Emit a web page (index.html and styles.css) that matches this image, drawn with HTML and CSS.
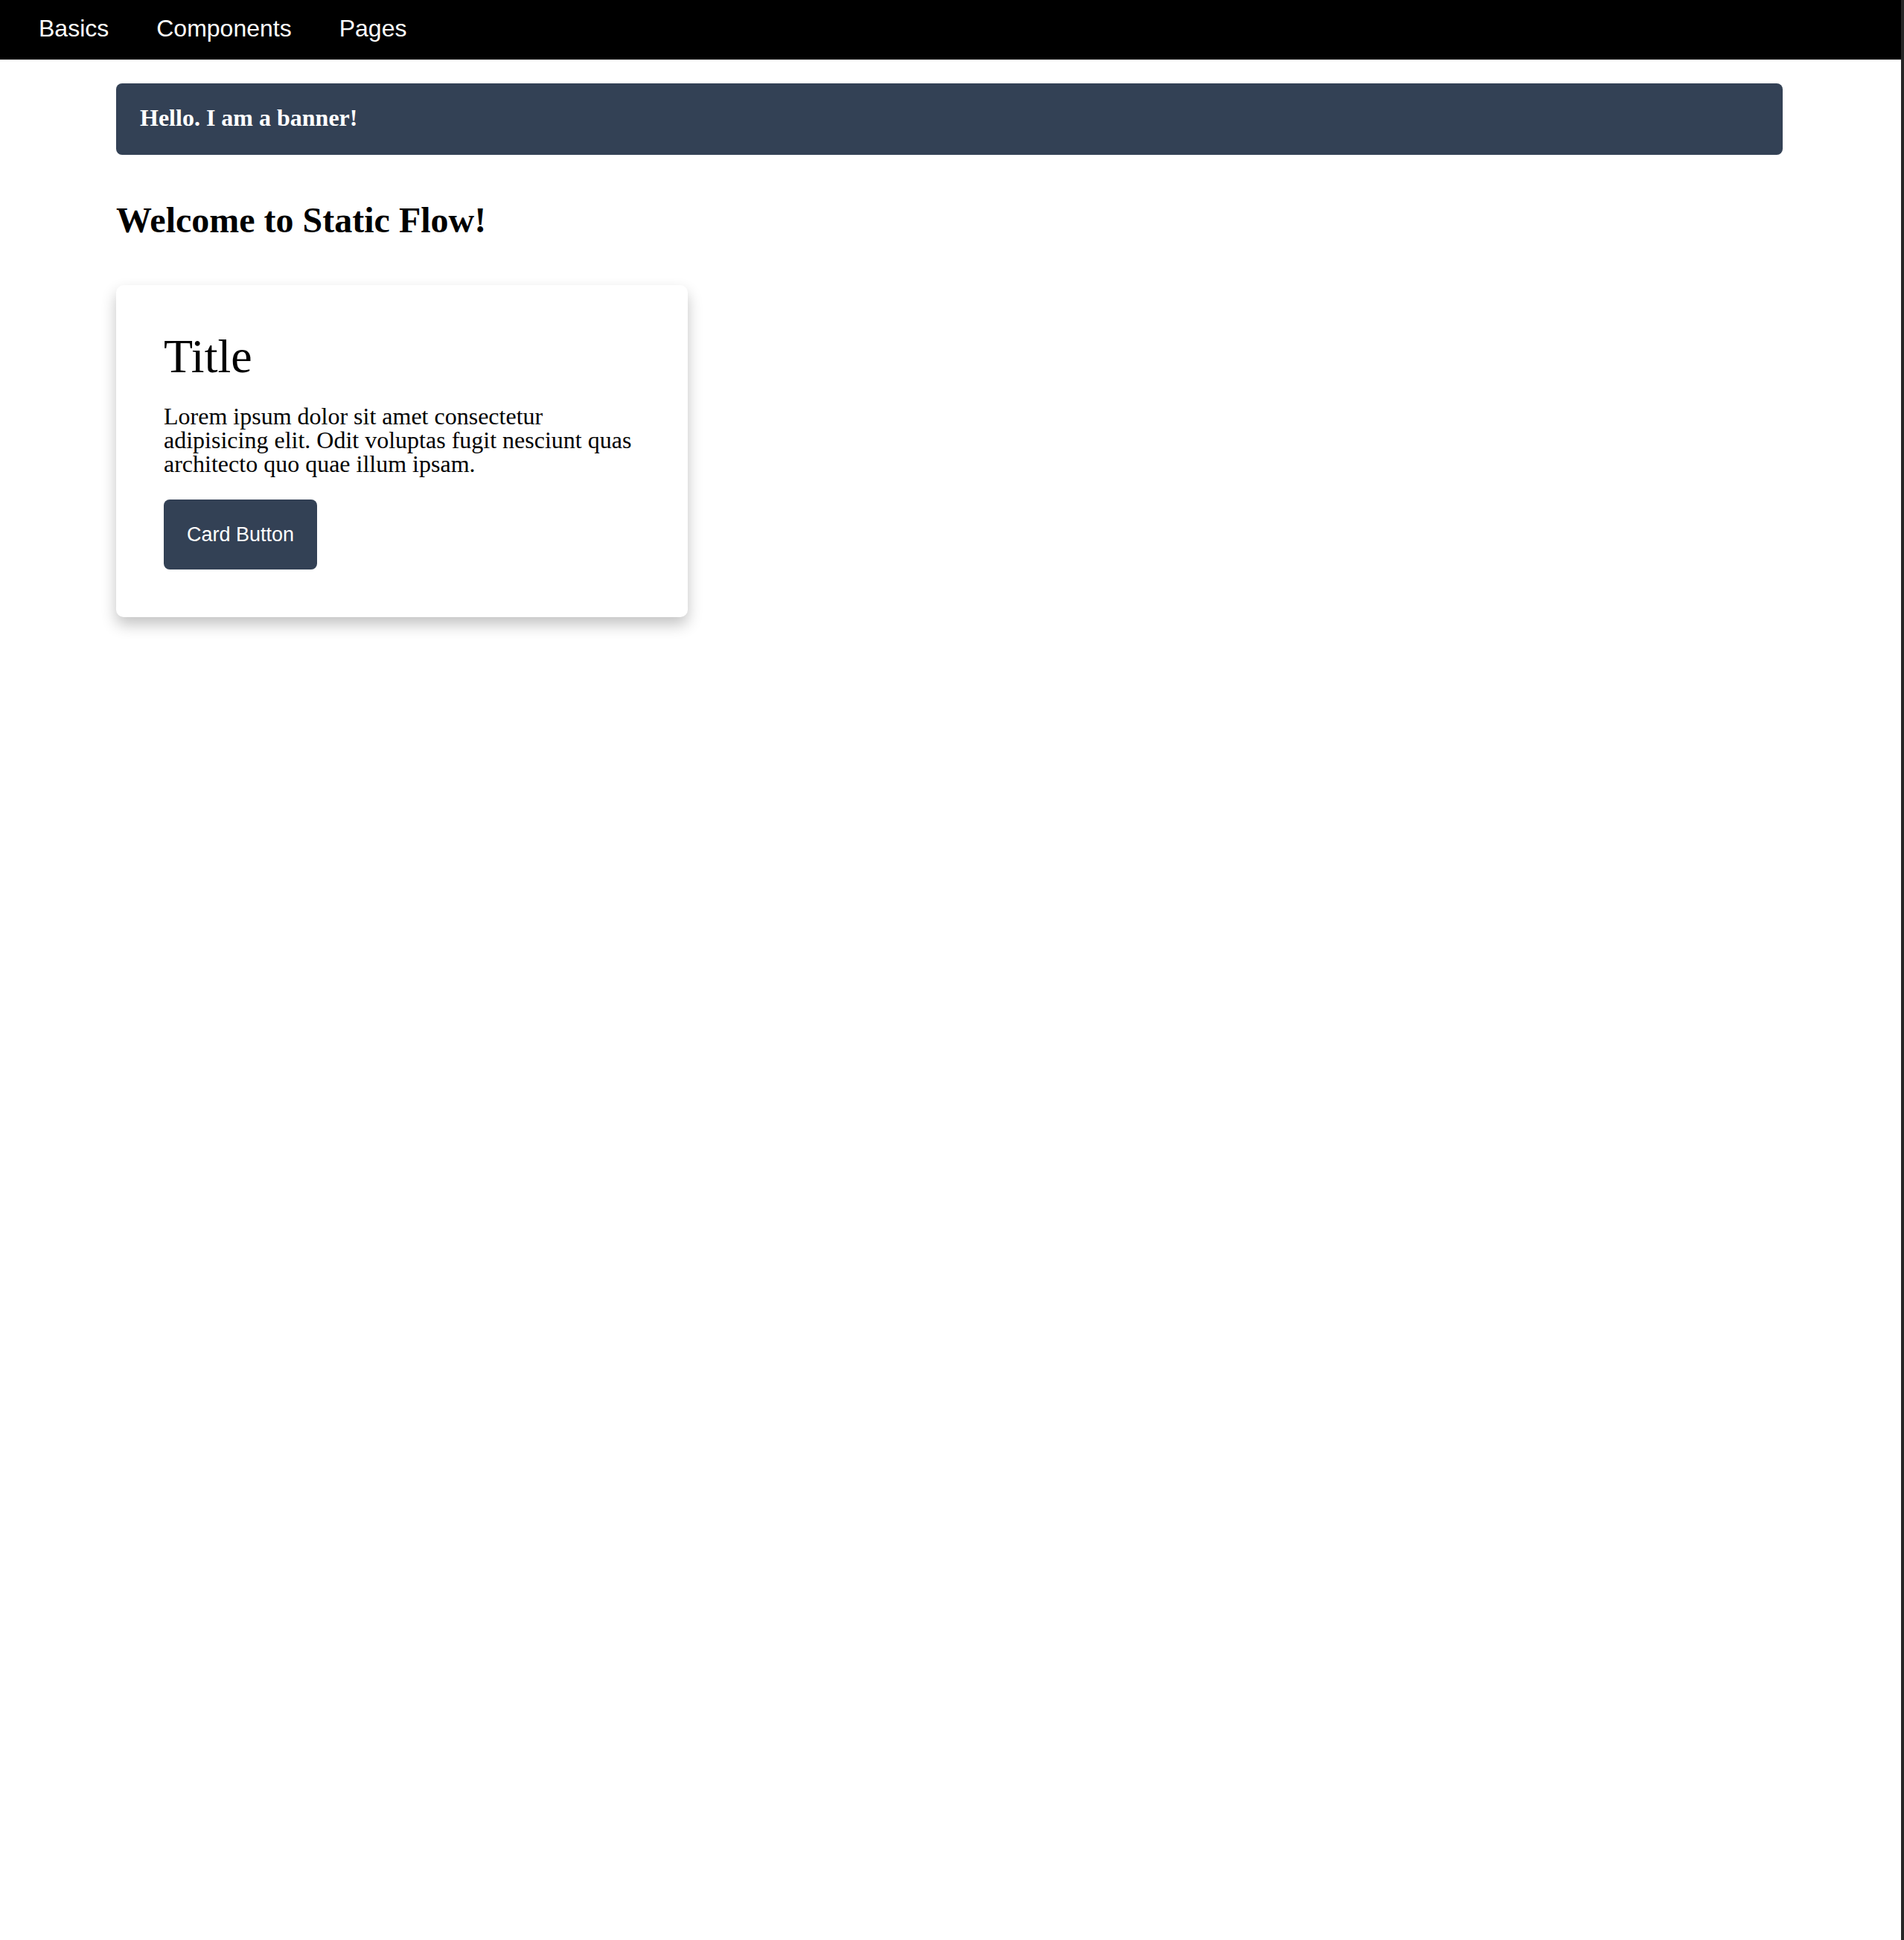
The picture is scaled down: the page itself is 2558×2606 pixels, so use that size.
FILE: index.html
```html
<!DOCTYPE html>
<html lang="en">
<head>
<meta charset="utf-8">
<title>Static Flow</title>
<link rel="stylesheet" href="styles.css">
</head>
<body>
<nav class="topnav">
  <a class="nav-link" href="#">Basics</a>
  <a class="nav-link" href="#">Components</a>
  <a class="nav-link" href="#">Pages</a>
</nav>
<main class="content">
  <div class="banner"><strong>Hello. I am a banner!</strong></div>
  <h2 class="page-title">Welcome to Static Flow!</h2>
  <div class="card">
    <h1 class="card-title">Title</h1>
    <p class="card-text">Lorem ipsum dolor sit amet consectetur adipisicing elit. Odit voluptas fugit nesciunt quas architecto quo quae illum ipsam.</p>
    <button class="card-button" type="button">Card Button</button>
  </div>
</main>
</body>
</html>
```

FILE: styles.css
```css
* {
  box-sizing: border-box;
}

html {
  background: #ffffff;
}

body {
  margin: 0;
  min-height: 100vh;
  border-right: 4px solid #262626;
  font-family: "Liberation Serif", "Times New Roman", serif;
  line-height: 1;
  color: #000000;
  background: #ffffff;
}

.topnav {
  display: flex;
  align-items: flex-start;
  height: 80px;
  padding-left: 20px;
  background: #000000;
}

.nav-link {
  padding: 22px 32px 26px 32px;
  font-family: "Liberation Sans", Arial, Helvetica, sans-serif;
  font-size: 32px;
  line-height: 32px;
  color: #ffffff;
  text-decoration: none;
}

.content {
  padding: 32px 159px 0 156px;
}

.banner {
  padding: 30px 32px 34px 32px;
  border-radius: 8px;
  background: #334155;
  color: #ffffff;
  font-size: 32px;
  line-height: 32px;
}

.page-title {
  margin: 64px 0 63px 0;
  font-size: 48px;
  line-height: 48px;
  font-weight: bold;
}

.card {
  width: 768px;
  padding: 64px;
  border-radius: 10px;
  background: #ffffff;
  box-shadow: 0 10px 20px 0 rgba(0, 0, 0, 0.24);
}

.card-title {
  margin: 0;
  font-size: 64px;
  line-height: 64px;
  font-weight: normal;
}

.card-text {
  margin: 32px 0 32px 0;
  font-size: 32px;
  line-height: 32px;
}

.card-button {
  display: block;
  padding: 32px 31px;
  border: none;
  border-radius: 8px;
  background: #334155;
  color: #ffffff;
  font-family: "Liberation Sans", Arial, Helvetica, sans-serif;
  font-size: 27px;
  line-height: 30px;
}
```
